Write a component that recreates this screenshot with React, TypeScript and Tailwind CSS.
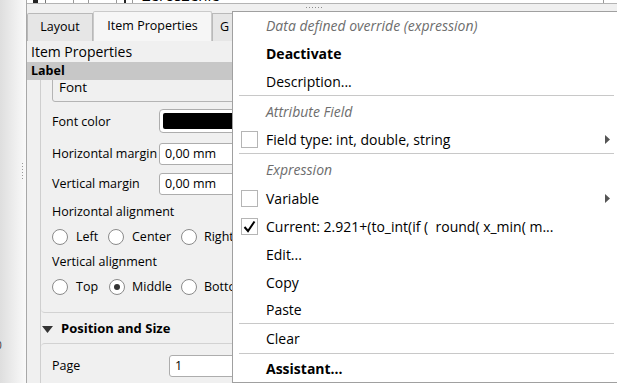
import React from "react";

const font = "font-['Segoe_UI','Open_Sans',sans-serif]";

function Radio({ checked }: { checked?: boolean }) {
  return (
    <span className="w-[16px] h-[16px] rounded-full border border-[#8a8a8a] bg-white flex items-center justify-center shrink-0">
      {checked && <span className="w-[6px] h-[6px] rounded-full bg-[#333]" />}
    </span>
  );
}

function Check({ checked }: { checked?: boolean }) {
  return (
    <span className="w-[17px] h-[17px] border border-[#b5b5b5] bg-white flex items-center justify-center">
      {checked && (
        <svg width="13" height="13" viewBox="0 0 13 13">
          <path d="M1.5 7 L5 11 L11.5 1.5" fill="none" stroke="#000" strokeWidth="2" />
        </svg>
      )}
    </span>
  );
}

function Arrow() {
  return (
    <svg width="5" height="9" viewBox="0 0 5 9" className="ml-auto mr-[21px]">
      <path d="M0 0 L5 4.5 L0 9 Z" fill="#555" />
    </svg>
  );
}

interface RowProps {
  h: string;
  children: React.ReactNode;
  box?: boolean;
  checked?: boolean;
  arrow?: boolean;
  className?: string;
}

function Row({ h, children, box, checked, arrow, className }: RowProps) {
  return (
    <div className={`${h} flex items-center`}>
      <div className="w-[33px] pl-[8px] flex items-center">{box && <Check checked={checked} />}</div>
      <span className={`whitespace-nowrap ${className ?? "text-black"}`}>{children}</span>
      {arrow && <Arrow />}
    </div>
  );
}

const Sep = () => <div className="h-px ml-[6px] w-[375px] bg-[#c8c8c8]" />;

function ContextMenu() {
  return (
    <div className="absolute left-[232px] top-[11px] w-[400px] h-[372px] bg-white border border-[#a0a0a0] text-[14px]">
      <Row h="h-[27px]" className="italic text-[#6d6d6d]">Data defined override (expression)</Row>
      <Row h="h-[29px]" className="font-bold text-black">Deactivate</Row>
      <Row h="h-[27px]">Description...</Row>
      <Sep />
      <Row h="h-[30px]" className="italic text-[#6d6d6d]">Attribute Field</Row>
      <Row h="h-[27px]" box arrow>Field type: int, double, string</Row>
      <Sep />
      <Row h="h-[30px]" className="italic text-[#6d6d6d]">Expression</Row>
      <Row h="h-[28px]" box arrow>Variable</Row>
      <Row h="h-[28px]" box checked>Current: 2.921+(to_int(if (&nbsp; round( x_min( m...</Row>
      <Row h="h-[28px]">Edit...</Row>
      <Row h="h-[28px]">Copy</Row>
      <Row h="h-[27px]">Paste</Row>
      <Sep />
      <Row h="h-[29px]">Clear</Row>
      <Sep />
      <Row h="h-[28px]" className="font-bold text-black">Assistant...</Row>
    </div>
  );
}

function Field({ label, value }: { label: string; value: string }) {
  return (
    <div className="flex items-center h-[22px]">
      <span className="w-[107px] shrink-0 whitespace-nowrap">{label}</span>
      <div className="flex-1 h-[22px] bg-white border border-[#adadad] rounded-[3px] pl-[5px] flex items-center">
        {value}
      </div>
    </div>
  );
}

export default function App() {
  return (
    <div className={`w-[617px] h-[383px] overflow-hidden relative bg-[#f0f0f0] flex text-[12.5px] text-black ${font}`}>
      {/* left dock strip */}
      <div className="w-[27px] shrink-0 bg-gradient-to-r from-[#dedede] to-[#fafafa] border-r border-[#a8a8a8] flex flex-col">
        <div className="h-[163px]" />
        <div className="ml-[22px] flex flex-col gap-[2px]">
          {[0, 1, 2, 3, 4, 5].map((i) => (
            <span key={i} className="w-px h-px bg-[#999]" />
          ))}
        </div>
        <div className="h-[161px]" />
        <span className="text-[10px] leading-none -ml-[4px] text-[#333]">0</span>
      </div>

      <div className="flex-1 flex flex-col min-w-0">
        {/* bottom of attribute table row */}
        <div className="h-[4px] bg-white border-b border-[#b4b4b4] flex overflow-hidden">
          <div className="w-[19px] border-r border-[#777] flex justify-center">
            <span className="w-[5px] h-[3px] bg-[#222] ml-[-2px]" />
          </div>
          <div className="w-[28px] border-r border-[#999]" />
          <div className="w-[15px] border-r border-[#999]" />
          <div className="w-[28px] border-r border-[#999]" />
          <div className="w-[16px] border-r border-[#999] flex justify-center">
            <span className="w-[2px] h-[3px] bg-[#222]" />
          </div>
          <div className="pl-[9px] -mt-[12px] text-[15px] leading-[15px] whitespace-nowrap">Zeros2enie</div>
          <div className="flex-1" />
          <div className="w-[14px] border-l border-[#999]" />
        </div>
        {/* splitter */}
        <div className="h-[7px] flex justify-center items-center pr-[16px]">
          <div className="flex gap-[2px]">
            {[0, 1, 2, 3, 4, 5].map((i) => (
              <span key={i} className="w-px h-px bg-[#8c8c8c]" />
            ))}
          </div>
        </div>

        {/* tabs */}
        <div className="h-[30px] flex items-end">
          <div className="w-[66px] h-[28px] bg-[#e6e6e6] border border-[#b9b9b9] border-b-0 rounded-tl-[2px] flex items-center justify-center">
            Layout
          </div>
          <div className="w-[119px] h-[30px] bg-[#f6f6f6] border border-[#cacaca] border-b-0 rounded-t-[2px] flex items-center justify-center">
            Item Properties
          </div>
          <div className="w-[30px] h-[28px] bg-[#e6e6e6] border border-[#b9b9b9] border-b-0 pl-[7px] flex items-center">
            G
          </div>
        </div>

        <div className="pl-[4px] pt-[2px] text-[14px] leading-[18px]">Item Properties</div>
        <div className="mt-[1px] h-[18px] bg-[#c7c7c7] pl-[4px] pt-[1px] font-bold flex items-center">Label</div>

        {/* scroll area */}
        <div className="flex-1 ml-[13px] border-l border-[#cfcfcf] overflow-hidden flex flex-col">
          <div className="border border-[#d2d2d2] border-t-0 border-l-0 rounded-bl-[4px] flex flex-col">
            <div className="ml-[11px] -mt-[8px] h-[30px] border border-[#b4b4b4] rounded-[3px] pl-[6px] flex items-center text-[13.5px]">
              Font
            </div>
            <div className="pl-[11px] pt-[7px] pb-[12px] flex flex-col">
              <div className="flex items-center h-[24px]">
                <span className="w-[107px] shrink-0 pt-[2px]">Font color</span>
                <div className="flex-1 h-[24px] bg-white border border-[#adadad] rounded-[4px] p-[3px]">
                  <div className="w-full h-full bg-black rounded-[2px]" />
                </div>
              </div>
              <div className="h-[10px]" />
              <Field label="Horizontal margin" value="0,00 mm" />
              <div className="h-[8px]" />
              <Field label="Vertical margin" value="0,00 mm" />
              <div className="mt-[5px] h-[24px] flex items-center">Horizontal alignment</div>
              <div className="h-[26px] flex items-center whitespace-nowrap">
                <Radio />
                <span className="ml-[8px] w-[32px]">Left</span>
                <Radio />
                <span className="ml-[8px] w-[49px]">Center</span>
                <Radio />
                <span className="ml-[7px]">Right</span>
              </div>
              <div className="h-[24px] flex items-center pt-[1px]">Vertical alignment</div>
              <div className="h-[26px] flex items-center whitespace-nowrap">
                <Radio />
                <span className="ml-[8px] w-[33px]">Top</span>
                <Radio checked />
                <span className="ml-[7px] w-[49px]">Middle</span>
                <Radio />
                <span className="ml-[7px]">Bottom</span>
              </div>
            </div>
          </div>

          <div className="h-[30px] flex items-center font-bold text-[13px] pt-[2px]">
            <svg width="11" height="7" viewBox="0 0 11 7" className="ml-[1px] mr-[8px]">
              <path d="M0 0 L11 0 L5.5 7 Z" fill="#333" />
            </svg>
            Position and Size
          </div>
          <div className="flex-1 border border-[#d2d2d2] border-l-0 border-b-0 rounded-tl-[4px] pl-[11px] pt-[11px]">
            <div className="flex items-center h-[22px]">
              <span className="w-[117px] shrink-0">Page</span>
              <div className="flex-1 h-[22px] bg-white border border-[#adadad] rounded-[3px] pl-[5px] flex items-center">1</div>
            </div>
          </div>
        </div>
      </div>

      <ContextMenu />
    </div>
  );
}
